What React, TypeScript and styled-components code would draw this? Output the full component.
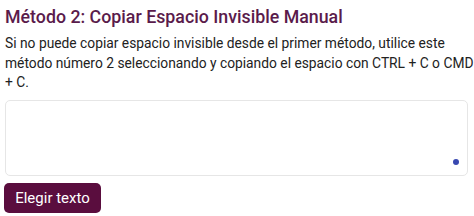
import { createGlobalStyle, styled } from "styled-components";

const GlobalStyle = createGlobalStyle`
    body {
        margin: 0;
        background: #ffffff;
        font-family: Roboto, "Liberation Sans", sans-serif;
    }
`;

const StyledSection = styled.section`
    padding: 5px 5px 0 5px;
    display: flex;
    flex-direction: column;
`;

const StyledH2 = styled.h2`
    margin: 0;
    font-size: 17.8px;
    font-weight: 500;
    line-height: 23px;
    color: #5a1b4b;
`;

const StyledP = styled.p`
    margin: 6px 0 0 0;
    font-size: 13.8px;
    line-height: 19.5px;
    color: #222222;
    white-space: nowrap;
`;

const StyledBox = styled.div`
    position: relative;
    margin-top: 7px;
    width: 463px;
    height: 76px;
    box-sizing: border-box;
    border: 1px solid #e6e6e6;
    border-radius: 5px;
`;

const StyledArea = styled.textarea`
    width: 100%;
    height: 100%;
    box-sizing: border-box;
    border: none;
    outline: none;
    resize: none;
    background: transparent;
    font-family: inherit;
    font-size: 14px;
    padding: 6px 8px;
`;

const StyledDot = styled.span`
    position: absolute;
    right: 8px;
    bottom: 10px;
    width: 6px;
    height: 6px;
    border-radius: 50%;
    background: #3848b0;
`;

const StyledButton = styled.button`
    align-self: flex-start;
    margin-top: 7px;
    margin-left: -1px;
    width: 97px;
    height: 30px;
    background-color: #5a0d3e;
    border: none;
    border-radius: 5px;
    color: #ffffff;
    font-family: inherit;
    font-size: 15px;
    font-weight: 400;
    padding: 0;
`;

export default function App() {
    return (
        <>
            <GlobalStyle />
            <StyledSection>
                <StyledH2>Método 2: Copiar Espacio Invisible Manual</StyledH2>
                <StyledP>
                    Si no puede copiar espacio invisible desde el primer método, utilice este
                    <br />
                    método número 2 seleccionando y copiando el espacio con CTRL + C o CMD
                    <br />
                    + C.
                </StyledP>
                <StyledBox>
                    <StyledArea />
                    <StyledDot />
                </StyledBox>
                <StyledButton>Elegir texto</StyledButton>
            </StyledSection>
        </>
    );
}
